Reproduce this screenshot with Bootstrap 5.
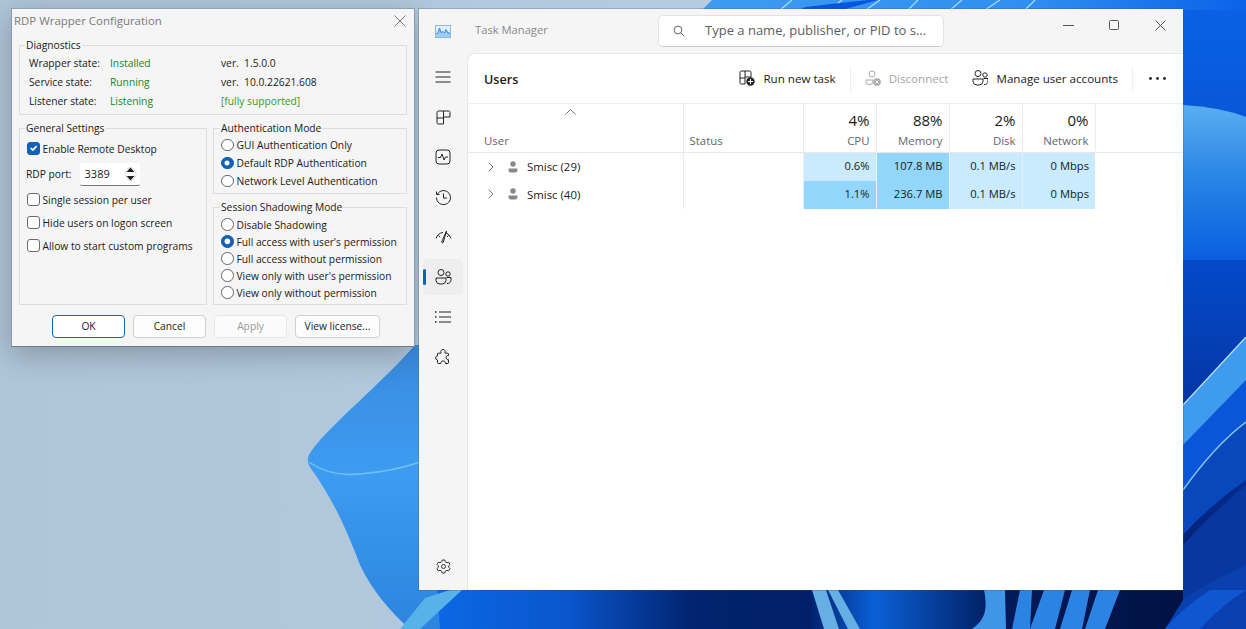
<!doctype html>
<html lang="en">
<head>
<meta charset="utf-8">
<title>RDP Wrapper and Task Manager</title>
<link href="https://cdn.jsdelivr.net/npm/bootstrap@5.3.0/dist/css/bootstrap.min.css" rel="stylesheet">
<style>
html,body{height:100%;margin:0;overflow:hidden}
body{font-family:"Open Sans","Noto Sans",sans-serif;background:#b6cbdf;color:#1a1a1a}
.desk{position:relative;width:1246px;height:629px;overflow:hidden}
.wallpaper{position:absolute;inset:0;width:1246px;height:629px}

/* RDP dialog */
.dlg{position:absolute;left:11px;top:8px;width:404px;height:339px;background:#f5f5f5;border:1px solid #8b9bab;border-bottom-color:#6f7a85;border-top-color:#8fa3b5;box-shadow:0 8px 28px rgba(40,50,60,.32);font-size:10.25px;line-height:14px;padding:0 7px;white-space:nowrap}
.dlg-title{height:29px;color:#7b7b7b;font-size:11.45px;margin:0 -5px;padding:0 0 5px}
.dlg-x{width:14px;height:14px;margin-right:5px}
.gbox{border:1px solid #dddddd;margin:0;padding:0 6px;min-width:0}
.gbox legend{float:none;width:auto;font-size:10.25px;line-height:14px;margin:0;padding:0 1px;color:#1a1a1a}
.gb-diag legend,.gb-general legend{margin-left:-1px}
.gb-diag{height:77px}
.diag-grid{display:grid;grid-template-columns:81px 111px 1fr;grid-auto-rows:19px;align-items:center;margin-left:3px;margin-top:1px}
.ok-green{color:#17852a}
.ok-lime{color:#3d9a1e}
.gb-row{display:grid;grid-template-columns:188px 194px;grid-template-rows:73px 105px;gap:6px;margin-top:6px}
.gb-general{grid-row:span 2;padding-top:2px}
.gb-auth .opt{height:18px}
.gb-auth{padding-top:1px}
.gb-shadow{padding-top:2px}
.gb-shadow .opt{height:17px}
.opt{display:flex;align-items:center;gap:3px;margin:0}
.dlg .form-check-input{width:12.5px;height:12.5px;margin:0 0 0 1px;flex:none;background-color:#fff;border:1px solid #6a6a6a;float:none}
.dlg .form-check-input:checked{background-color:#0f62b8;border-color:#0f62b8}
.dlg input[type=checkbox].form-check-input{border-radius:3px}
.opt-check{height:23px}
.spin{width:60px;height:23px;background:#fff;border-bottom:1px solid #777;border-radius:2px;padding:0 3px 0 5px;font-size:11px}
.port-row{height:28px;gap:8px}
.dlg-btn{height:23px;border:1px solid #d0d0d0;background:#fdfdfd;border-radius:4px;font-size:10.25px;line-height:1;padding:0;color:#1a1a1a;width:73px}
.dlg-btn.primary-btn{border-color:#1266b5;background:#fff}
.dlg-btn:disabled{color:#9a9a9a;border-color:#e8e8e8;background:#fbfbfb;opacity:1}
.dlg-btn.wide{width:85px}
.dlg-actions{gap:8px;margin-top:10px;padding-left:33px}

/* Task manager */
.tm{position:absolute;left:419px;top:9px;width:764px;height:581px;background:#f5f5f5;display:flex;flex-direction:column;box-shadow:0 0 0 1px rgba(60,80,110,.25);font-size:11.4px}
.tm-bar{height:44px;flex:none}
.tm-appico{width:48px;flex:none}
.tm-name{width:191px;padding:0 0 2px 8px;color:#8a8a8a;font-size:11.2px}
.tm-search{width:286px;height:32px;margin-top:-1px;background:#fff;border:1px solid #e3e3e3;border-bottom-color:#cfcfcf;border-radius:5px;padding-left:14px;gap:20px;color:#5d5d5d;font-size:13px;white-space:nowrap}
.caption{margin-left:auto;height:44px}
.cap-btn{width:46px;height:44px;padding-bottom:12px}
.tm-main{flex:1;min-height:0}
.tm-side{width:48px;flex:none;padding:4px 4px 4px}
.nav-cell{height:40px;display:flex;align-items:center;justify-content:center;position:relative;border-radius:5px}
.nav-cell.sel::before{content:"";position:absolute;inset:2px 0;background:#eeeeee;border-radius:5px}
.nav-cell.sel::after{content:"";position:absolute;left:0;top:12px;width:3px;height:16px;background:#0f62b8;border-radius:2px}
.nav-cell svg{position:relative;z-index:1}
.tm-content{flex:1;background:#fff;border:1px solid #e8e8e8;border-right:0;border-bottom:0;border-top-left-radius:8px;min-width:0}
.tm-head{height:49px;padding:0 17px 0 16px}
.tm-h1{font-size:12.6px;font-weight:600;color:#1a1a1a;padding-top:3px}
.tool{gap:8px;color:#1a1a1a;white-space:nowrap;font-size:11.6px}
.tool-off{color:#a5a5a5}
.tool-sep{width:1px;height:26px;background:#eeeeee}
.tool-gap{margin-right:14px}
.grid-tm{border-collapse:collapse;table-layout:fixed;width:100%}
.grid-tm th,.grid-tm td{padding:0 6px;font-weight:400}
.grid-tm thead tr{height:49px;border-top:1px solid #efefef;border-bottom:1px solid #e8e8e8}
.grid-tm tbody tr{height:28px}
.grid-tm th{vertical-align:bottom;padding-bottom:4px;color:#666;line-height:15px}
.th-pct{display:block;font-size:15px;color:#1a1a1a;line-height:21px;margin-bottom:2px}
.grid-tm .line-l{border-left:1px solid #ececec}
.grid-tm .num{text-align:right}
.user-th{padding-left:16px!important;position:relative}
.sort-caret{position:absolute;left:97px;top:5px}
.heat-a{background:#c9ebfd}
.heat-b{background:#93d6fb}
.grid-tm td.heat-a,.grid-tm td.heat-b{border-left:1px solid #e2f1fb;color:#1a1a1a;font-size:11.2px}
.usr{padding-left:14px}
.usr-person{margin:0 9px 0 14px}
.col-user{width:215px}
.col-status{width:120px}
.col-metric{width:73px}
</style>
</head>
<body>
<div class="desk">
<svg class="wallpaper" viewBox="0 0 1246 629" preserveAspectRatio="none" aria-hidden="true">
  <defs>
    <linearGradient id="pale" x1="0" y1="0" x2="1" y2="0"><stop offset="0" stop-color="#afc6d8"/><stop offset=".5" stop-color="#b3cadf"/><stop offset="1" stop-color="#c0d3e7"/></linearGradient>
    <linearGradient id="petal" x1="0" y1="0" x2="0" y2="1"><stop offset="0" stop-color="#3a8ae0"/><stop offset=".45" stop-color="#3d9cf0"/><stop offset="1" stop-color="#2c84de"/></linearGradient>
    <linearGradient id="deep" x1="0" y1="0" x2="0" y2="1"><stop offset="0" stop-color="#0a62e6"/><stop offset=".45" stop-color="#0447c4"/><stop offset=".7" stop-color="#04309c"/><stop offset="1" stop-color="#021a5c"/></linearGradient>
    <linearGradient id="botband" x1="0" y1="0" x2="1" y2="0"><stop offset="0" stop-color="#0c6ae8"/><stop offset=".18" stop-color="#0a55cc"/><stop offset=".33" stop-color="#02236f"/><stop offset=".47" stop-color="#021f6a"/><stop offset=".55" stop-color="#0a60d8"/><stop offset=".7" stop-color="#011a5a"/><stop offset="1" stop-color="#010f3c"/></linearGradient>
    <linearGradient id="dome" x1="0" y1="0" x2="0" y2="1"><stop offset="0" stop-color="#5aaef0"/><stop offset=".45" stop-color="#2b86e6"/><stop offset="1" stop-color="#0a5ee0"/></linearGradient>
    <linearGradient id="topband" x1="0" y1="0" x2="1" y2="0"><stop offset="0" stop-color="#3f9bf0"/><stop offset=".6" stop-color="#2f8ff0"/><stop offset="1" stop-color="#0a62e8"/></linearGradient>
  </defs>
  <rect width="1246" height="629" fill="url(#pale)"/>
  <rect x="1000" width="246" height="629" fill="url(#deep)"/>
  <rect x="420" y="585" width="826" height="44" fill="url(#botband)"/>
  <path d="M712 0H1246V10H702Z" fill="url(#topband)"/>
  <path d="M780 10L792 0M830 10L842 0M866 10L880 0M908 10L918 0M950 10L962 0M985 10L1000 0M1025 10L1035 0" stroke="#a5d6f7" stroke-width="1.4"/>
  <path d="M805 7Q830 4 868 0H878L842 10H800Z" fill="#0656de"/>
  <path d="M415 345C380 385 330 425 312 450C306 458 307 463 312 470C330 495 345 525 360 565C372 590 390 612 410 629H440L420 345Z" fill="url(#petal)"/>
  <path d="M309 462Q330 477 360 474Q395 471 420 462" fill="none" stroke="#6fc0f5" stroke-width="1.4"/>
  <path d="M400 629L425 598L450 590L462 590L420 629Z" fill="#58b2ea"/>
  <path d="M1183 105Q1220 107 1246 117V260H1183Z" fill="url(#dome)"/>
  <path d="M1183 405L1246 337V400L1183 460Z" fill="#3f9bee"/>
  <path d="M1183 445L1246 380V430L1183 490Z" fill="#0b56d8"/>
  <path d="M1183 490Q1215 445 1246 422V480Q1210 505 1183 535Z" fill="#0a47bc"/>
  <path d="M1183 490Q1215 445 1246 422" fill="none" stroke="#7dc7f5" stroke-width="1.5"/>
  <path d="M1183 405L1246 337" fill="none" stroke="#b7e1fa" stroke-width="1.2"/>
  <path d="M1183 545Q1215 510 1246 485V570Q1210 590 1183 610Z" fill="#0837a0"/>
  <path d="M1183 600Q1215 578 1246 565V629H1165Z" fill="#0a3fb0"/>
  <path d="M812 590L824 629H839L826 590ZM828 590L848 629H860L838 590Z" fill="#67aee4"/>
  <path d="M984 590C988 610 985 620 972 629H1006L1005 590Z" fill="#3f95e8"/>
  <path d="M1020 590L1012 629H1030L1032 590ZM1044 590L1030 629H1055L1065 590ZM1072 590L1060 629H1082L1090 590ZM1098 590L1085 629H1105L1120 590Z" fill="#2b83e4"/>
  <path d="M1210 590Q1180 610 1165 629H1200Q1222 605 1246 590Z" fill="#0f57d0"/>
</svg>

<!-- RDP Wrapper dialog -->
<section class="dlg d-flex flex-column">
  <div class="dlg-title d-flex align-items-center justify-content-between">
    <span>RDP Wrapper Configuration</span>
    <svg class="dlg-x" viewBox="0 0 14 14"><path d="M1.500 1.500l11 11M12.500 1.500l-11 11" stroke="#777" stroke-width="1" fill="none"/></svg>
  </div>
  <fieldset class="gbox gb-diag">
    <legend>Diagnostics</legend>
    <div class="diag-grid">
      <span>Wrapper state:</span><span class="ok-green">Installed</span><span>ver.&nbsp; 1.5.0.0</span>
      <span>Service state:</span><span class="ok-green">Running</span><span>ver.&nbsp; 10.0.22621.608</span>
      <span>Listener state:</span><span class="ok-green">Listening</span><span class="ok-lime">[fully supported]</span>
    </div>
  </fieldset>
  <div class="gb-row">
    <fieldset class="gbox gb-general">
      <legend>General Settings</legend>
      <label class="opt opt-check"><input class="form-check-input" type="checkbox" checked>Enable Remote Desktop</label>
      <div class="d-flex align-items-center port-row">
        <span>RDP port:</span>
        <div class="spin d-flex align-items-center justify-content-between">
          <span>3389</span>
          <svg width="13" height="18" viewBox="0 0 13 18"><path d="M6.500 2.500L10.500 7H2.500ZM2.500 11H10.500L6.500 15.500Z" fill="#222"/><path d="M1 8.500C3 .5 10 .5 12 8.500M1 9.500C3 17.500 10 17.500 12 9.500" fill="none" stroke="#ccc" stroke-width=".8"/></svg>
        </div>
      </div>
      <label class="opt opt-check"><input class="form-check-input" type="checkbox">Single session per user</label>
      <label class="opt opt-check"><input class="form-check-input" type="checkbox">Hide users on logon screen</label>
      <label class="opt opt-check"><input class="form-check-input" type="checkbox">Allow to start custom programs</label>
    </fieldset>
    <fieldset class="gbox gb-auth">
      <legend>Authentication Mode</legend>
      <label class="opt"><input class="form-check-input" type="radio" name="auth">GUI Authentication Only</label>
      <label class="opt"><input class="form-check-input" type="radio" name="auth" checked>Default RDP Authentication</label>
      <label class="opt"><input class="form-check-input" type="radio" name="auth">Network Level Authentication</label>
    </fieldset>
    <fieldset class="gbox gb-shadow">
      <legend>Session Shadowing Mode</legend>
      <label class="opt"><input class="form-check-input" type="radio" name="shadow">Disable Shadowing</label>
      <label class="opt"><input class="form-check-input" type="radio" name="shadow" checked>Full access with user's permission</label>
      <label class="opt"><input class="form-check-input" type="radio" name="shadow">Full access without permission</label>
      <label class="opt"><input class="form-check-input" type="radio" name="shadow">View only with user's permission</label>
      <label class="opt"><input class="form-check-input" type="radio" name="shadow">View only without permission</label>
    </fieldset>
  </div>
  <div class="d-flex dlg-actions">
    <button class="dlg-btn primary-btn" type="button">OK</button>
    <button class="dlg-btn" type="button">Cancel</button>
    <button class="dlg-btn" type="button" disabled>Apply</button>
    <button class="dlg-btn wide" type="button">View license...</button>
  </div>
</section>

<!-- Task Manager -->
<section class="tm">
  <header class="tm-bar d-flex align-items-center">
    <div class="tm-appico d-flex justify-content-center">
      <svg width="16" height="13" viewBox="0 0 16 13"><rect x=".5" y=".5" width="15" height="12" fill="#e4f1fb" stroke="#8fb8dc"/><path d="M1 9L3 8L4.500 3L6 7.500L8 6.500L9.500 8L11 4.500L13 8L15 8V12H1Z" fill="#9ccdf3"/><path d="M1 9L3 8L4.500 3L6 7.500L8 6.500L9.500 8L11 4.500L13 8L15 8" fill="none" stroke="#2f86d6"/></svg>
    </div>
    <div class="tm-name">Task Manager</div>
    <div class="tm-search d-flex align-items-center">
      <svg width="12" height="12" viewBox="0 0 12 12"><circle cx="5" cy="5" r="3.900" fill="none" stroke="#666"/><path d="M8 8l3.400 3.400" stroke="#666"/></svg>
      <span>Type a name, publisher, or PID to s...</span>
    </div>
    <div class="caption d-flex">
      <div class="cap-btn d-flex align-items-center justify-content-center"><svg width="11" height="11" viewBox="0 0 11 11"><path d="M0 5.500H11" stroke="#555"/></svg></div>
      <div class="cap-btn d-flex align-items-center justify-content-center"><svg width="11" height="11" viewBox="0 0 11 11"><rect x=".5" y=".5" width="9" height="9" rx="1" fill="none" stroke="#555"/></svg></div>
      <div class="cap-btn d-flex align-items-center justify-content-center"><svg width="11" height="11" viewBox="0 0 11 11"><path d="M.5 .5l10 10M10.500 .5l-10 10" stroke="#555"/></svg></div>
    </div>
  </header>
  <div class="tm-main d-flex">
    <nav class="tm-side d-flex flex-column">
      <div class="nav-cell"><svg width="16" height="12" viewBox="0 0 16 12"><path d="M.5 1H15.500M.5 6H15.500M.5 11H15.500" stroke="#222"/></svg></div>
      <div class="nav-cell"><svg width="15" height="15" viewBox="0 0 15 15"><path d="M1 8H7.500V14H2.500A1.500 1.500 0 0 1 1 12.500ZM1 8V2.500A1.500 1.500 0 0 1 2.500 1H7.500V8M7.500 7H14V2.500A1.500 1.500 0 0 0 12.500 1H7.500" fill="none" stroke="#222"/></svg></div>
      <div class="nav-cell"><svg width="16" height="16" viewBox="0 0 16 16"><rect x="1" y="1" width="14" height="14" rx="3" fill="none" stroke="#222"/><path d="M3 8.500H5.500L7 5L9 11L10.500 8H13" fill="none" stroke="#222"/></svg></div>
      <div class="nav-cell"><svg width="17" height="17" viewBox="0 0 17 17"><path d="M2.500 5A7 7 0 1 1 1.500 8.500M1.500 2.500V5.500H4.500M8.500 4.500V9H12" fill="none" stroke="#222"/></svg></div>
      <div class="nav-cell"><svg width="17" height="14" viewBox="0 0 17 14"><path d="M1 8.500Q3 3 8 2.500M10.500 2.700Q14.500 4 16 8.500M3.500 5.500L5 7M13.500 5.500L12 7" fill="none" stroke="#222"/><path d="M11.500 1L8.200 12.500A1 1 0 0 1 6.600 12Z" fill="none" stroke="#222"/></svg></div>
      <div class="nav-cell sel"><svg width="17" height="16" viewBox="0 0 17 16"><circle cx="6" cy="3.500" r="3" fill="none" stroke="#222"/><circle cx="13" cy="5" r="2.200" fill="none" stroke="#222"/><path d="M1 9H11V11.500A4 4 0 0 1 7 15H5A4 4 0 0 1 1 11.500ZM11.500 8.500H16V11A3.500 3.500 0 0 1 12 14.500" fill="none" stroke="#222"/></svg></div>
      <div class="nav-cell"><svg width="16" height="12" viewBox="0 0 16 12"><path d="M4 1H16M4 6H16M4 11H16" stroke="#222"/><path d="M0 1H1.500M0 6H1.500M0 11H1.500" stroke="#222" stroke-width="1.600"/></svg></div>
      <div class="nav-cell"><svg width="16" height="16" viewBox="0 0 16 16"><path d="M6 3.200A2.100 2.100 0 1 1 10 3.200V4.200H12.800A.8 .8 0 0 1 13.500 5V6.500H12.800A2.200 2.200 0 0 0 12.800 10.800H13.500V13.800A.8 .8 0 0 1 12.800 14.500H10.500V13.800A2.400 2.400 0 0 0 5.800 13.800V14.500H3.300A.8 .8 0 0 1 2.500 13.800V11H2.200A2.200 2.200 0 0 1 2.200 6.800H2.500V5A.8 .8 0 0 1 3.300 4.200H6Z" fill="none" stroke="#222" stroke-linejoin="round"/></svg></div>
      <div class="nav-cell mt-auto"><svg width="15" height="15" viewBox="0 0 15 15"><path d="M6.200 1H8.800L9.300 2.800L11 3.700L12.800 3.200L14 5.500L12.700 6.800V8.200L14 9.500L12.800 11.800L11 11.300L9.300 12.200L8.800 14H6.200L5.700 12.200L4 11.300L2.200 11.800L1 9.500L2.300 8.200V6.800L1 5.500L2.200 3.200L4 3.700L5.700 2.800Z" fill="none" stroke="#333"/><circle cx="7.500" cy="7.500" r="2" fill="none" stroke="#333"/></svg></div>
    </nav>
    <main class="tm-content d-flex flex-column">
      <div class="tm-head d-flex align-items-center">
        <div class="tm-h1 me-auto">Users</div>
        <div class="tool d-flex align-items-center tool-gap">
          <svg width="16" height="16" viewBox="0 0 16 16"><path d="M1 8H6V14H2.500A1.500 1.500 0 0 1 1 12.500ZM1 8V2.500A1.500 1.500 0 0 1 2.500 1H6V8M6 7H12V2.500A1.500 1.500 0 0 0 10.500 1H6" fill="none" stroke="#222"/><circle cx="11.500" cy="11.500" r="4.200" fill="#222"/><path d="M11.500 9V14M9 11.500H14" stroke="#fff"/></svg>
          <span>Run new task</span>
        </div>
        <div class="tool-sep tool-gap"></div>
        <div class="tool tool-off d-flex align-items-center me-4">
          <svg width="16" height="16" viewBox="0 0 16 16"><circle cx="7" cy="4" r="3" fill="none" stroke="#aaa"/><path d="M1 10H8V11.500A3 3 0 0 1 5 14.500H4A3 3 0 0 1 1 11.500Z" fill="none" stroke="#aaa"/><circle cx="12" cy="12" r="3.800" fill="#aaa"/><path d="M10.500 10.500l3 3M13.500 10.500l-3 3" stroke="#fff"/></svg>
          <span>Disconnect</span>
        </div>
        <div class="tool d-flex align-items-center tool-gap">
          <svg width="16" height="16" viewBox="0 0 16 16"><circle cx="6" cy="3.500" r="3" fill="none" stroke="#222"/><circle cx="13" cy="5" r="2.200" fill="none" stroke="#222"/><path d="M1 9H11V11.500A4 4 0 0 1 7 15H5A4 4 0 0 1 1 11.500ZM11.500 8.500H16V11A3.500 3.500 0 0 1 12 14.500" fill="none" stroke="#222"/></svg>
          <span>Manage user accounts</span>
        </div>
        <div class="tool-sep me-3"></div>
        <svg width="17" height="3" viewBox="0 0 17 3"><circle cx="1.500" cy="1.500" r="1.400" fill="#222"/><circle cx="8.500" cy="1.500" r="1.400" fill="#222"/><circle cx="15.500" cy="1.500" r="1.400" fill="#222"/></svg>
      </div>
      <table class="grid-tm">
        <colgroup><col class="col-user"><col class="col-status"><col class="col-metric"><col class="col-metric"><col class="col-metric"><col class="col-metric"><col></colgroup>
        <thead>
          <tr>
            <th class="user-th"><svg class="sort-caret" width="11" height="6" viewBox="0 0 11 6"><path d="M.5 5.500L5.500 .5L10.500 5.500" fill="none" stroke="#777"/></svg>User</th>
            <th class="line-l">Status</th>
            <th class="line-l num"><span class="th-pct">4%</span>CPU</th>
            <th class="line-l num"><span class="th-pct">88%</span>Memory</th>
            <th class="line-l num"><span class="th-pct">2%</span>Disk</th>
            <th class="line-l num"><span class="th-pct">0%</span>Network</th>
            <th class="line-l"></th>
          </tr>
        </thead>
        <tbody>
          <tr>
            <td><div class="usr d-flex align-items-center"><svg width="6" height="10" viewBox="0 0 6 10"><path d="M.7 .7L5 5L.7 9.300" fill="none" stroke="#777"/></svg><svg class="usr-person" width="10" height="12" viewBox="0 0 10 12"><circle cx="5" cy="3" r="2.700" fill="#888"/><path d="M.5 7.500H9.500V9A2.500 2.500 0 0 1 7 11.500H3A2.500 2.500 0 0 1 .5 9Z" fill="#888"/></svg><span>Smisc (29)</span></div></td>
            <td class="line-l"></td>
            <td class="num heat-a">0.6%</td><td class="num heat-b">107.8 MB</td><td class="num heat-a">0.1 MB/s</td><td class="num heat-a">0 Mbps</td><td></td>
          </tr>
          <tr>
            <td><div class="usr d-flex align-items-center"><svg width="6" height="10" viewBox="0 0 6 10"><path d="M.7 .7L5 5L.7 9.300" fill="none" stroke="#777"/></svg><svg class="usr-person" width="10" height="12" viewBox="0 0 10 12"><circle cx="5" cy="3" r="2.700" fill="#888"/><path d="M.5 7.500H9.500V9A2.500 2.500 0 0 1 7 11.500H3A2.500 2.500 0 0 1 .5 9Z" fill="#888"/></svg><span>Smisc (40)</span></div></td>
            <td class="line-l"></td>
            <td class="num heat-b">1.1%</td><td class="num heat-b">236.7 MB</td><td class="num heat-a">0.1 MB/s</td><td class="num heat-a">0 Mbps</td><td></td>
          </tr>
        </tbody>
      </table>
    </main>
  </div>
</section>
</div>
<script src="https://cdn.jsdelivr.net/npm/bootstrap@5.3.0/dist/js/bootstrap.bundle.min.js"></script>
</body>
</html>
